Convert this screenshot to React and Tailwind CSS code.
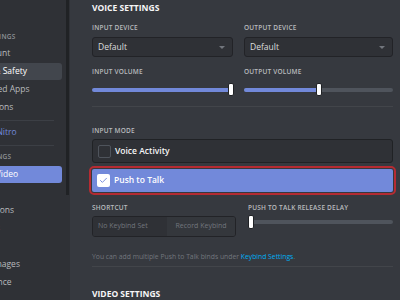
import { Check } from 'lucide-react';

const font = { fontFamily: '"Open Sans", "Noto Sans", sans-serif' };

function SideItem({ label, active, blue, nitro }) {
  let cls = 'text-[#b9bbbe]';
  if (active) cls = 'bg-[#42464d] text-white';
  if (blue) cls = 'bg-[#7289da] text-white';
  if (nitro) cls = 'text-[#7289da]';
  return (
    <div className={`h-[17px] mb-[1px] flex items-center px-[8px] rounded-[3px] text-[8.5px] font-medium whitespace-nowrap ${cls}`}>
      {label}
    </div>
  );
}

function SideHeader({ label, className }) {
  return (
    <div className={`h-[10px] flex items-center px-[8px] text-[6.5px] font-semibold tracking-[0.3px] text-[#8e9297] whitespace-nowrap ${className}`}>
      {label}
    </div>
  );
}

function Label({ children, className = '' }) {
  return (
    <div className={`h-[8px] flex items-center text-[6.5px] font-semibold tracking-[0.2px] text-[#b9bbbe] whitespace-nowrap ${className}`}>
      {children}
    </div>
  );
}

function Select({ value }) {
  return (
    <div className="mt-[5px] h-[20px] bg-[#2f3136] border border-[#222327] rounded-[3px] flex items-center justify-between pl-[5px] pr-[7px]">
      <span className="text-[8.5px] text-[#dcddde]">{value}</span>
      <span className="w-0 h-0 border-l-[3px] border-r-[3px] border-t-[3px] border-l-transparent border-r-transparent border-t-[#72767d]" />
    </div>
  );
}

function Slider({ pct }) {
  return (
    <div className="mt-[7px] h-[13px] relative flex items-center">
      <div className="w-full h-[4px] rounded-full bg-[#4f545c] overflow-hidden">
        <div className="h-full bg-[#7289da]" style={{ width: `${pct}%` }} />
      </div>
      <div
        className="absolute top-0 h-[13px] w-[6px] rounded-[2px] bg-white border border-[#202225]"
        style={{ left: `calc(${pct}% - 3px)` }}
      />
    </div>
  );
}

export default function App() {
  return (
    <div className="w-[400px] h-[300px] overflow-hidden flex bg-[#36393f]" style={font}>
      {/* sidebar, scrolled so its left part is out of view */}
      <div className="w-[70px] shrink-0 bg-[#2f3136] relative overflow-hidden">
        <div className="w-[106px] -ml-[44px]">
          <SideHeader label="USER SETTINGS" className="mt-[32px]" />
          <div className="mt-[3px]">
            <SideItem label="My Account" />
            <SideItem label="Privacy & Safety" active />
            <SideItem label="Authorized Apps" />
            <SideItem label="Connections" />
          </div>
          <div className="mt-[4px] h-px bg-[#3c3f45] mx-[8px]" />
          <div className="mt-[3px]">
            <SideItem label="Discord Nitro" nitro />
          </div>
          <div className="mt-[4px] h-px bg-[#3c3f45] mx-[8px]" />
          <SideHeader label="APP SETTINGS" className="mt-[6px]" />
          <div className="mt-[4px]">
            <SideItem label="Voice & Video" blue />
            <SideItem label="Overlay" />
            <SideItem label="Notifications" />
            <SideItem label="Keybinds" />
            <SideItem label="Games" />
            <SideItem label="Text & Images" />
            <SideItem label="Appearance" />
          </div>
        </div>
        <div className="absolute right-[1px] top-0 w-[3px] h-[195px] bg-[#202225]" />
      </div>

      {/* main */}
      <div className="flex-1 pl-[22px]">
        <div className="w-[301px] flex flex-col">
          <div className="mt-[3px] h-[10px] flex items-center text-[8.5px] font-bold text-[#f6f6f7]">
            VOICE SETTINGS
          </div>

          <div className="mt-[11px] grid grid-cols-[141px_149px] gap-x-[11px]">
            <div>
              <Label>INPUT DEVICE</Label>
              <Select value="Default" />
              <Label className="mt-[11px]">INPUT VOLUME</Label>
              <div className="w-[139px]">
                <Slider pct={100} />
              </div>
            </div>
            <div>
              <Label>OUTPUT DEVICE</Label>
              <Select value="Default" />
              <Label className="mt-[11px]">OUTPUT VOLUME</Label>
              <Slider pct={50} />
            </div>
          </div>

          <div className="mt-[10px] h-px bg-[#42454a]" />

          <Label className="mt-[20px]">INPUT MODE</Label>

          <div className="mt-[4px] h-[24px] bg-[#2f3136] border border-[#202225] rounded-[3px] flex items-center px-[5px] gap-[4px]">
            <div className="w-[13px] h-[13px] rounded-[2px] border border-[#4f545c]" />
            <span className="text-[8.5px] font-semibold text-[#f6f6f7]">Voice Activity</span>
          </div>

          <div className="mt-[6px] h-[23px] bg-[#7289da] rounded-[2px] flex items-center px-[5px] gap-[4px] outline-2 outline-offset-1 outline-[#b52b32]">
            <div className="w-[13px] h-[13px] rounded-[2px] bg-white flex items-center justify-center">
              <Check size={9} strokeWidth={2.5} color="#7289da" />
            </div>
            <span className="text-[8.5px] font-semibold text-white">Push to Talk</span>
          </div>

          <div className="mt-[12px] grid grid-cols-[144px_1fr] gap-x-[12px]">
            <div>
              <Label>SHORTCUT</Label>
              <div className="mt-[4px] h-[21px] flex border border-[#222327] rounded-[3px] overflow-hidden">
                <div className="w-[74px] bg-[#2f3136] flex items-center pl-[5px] text-[7px] text-[#72767d] whitespace-nowrap">
                  No Keybind Set
                </div>
                <div className="flex-1 bg-[#34373c] flex items-center justify-center text-[7px] text-[#72767d] whitespace-nowrap">
                  Record Keybind
                </div>
              </div>
            </div>
            <div>
              <Label>PUSH TO TALK RELEASE DELAY</Label>
              <div className="mt-[3px] h-[14px] relative flex items-center">
                <div className="w-full h-[4px] rounded-full bg-[#4f545c]" />
                <div className="absolute left-0 top-0 h-[14px] w-[6px] rounded-[2px] bg-white border border-[#202225]" />
              </div>
            </div>
          </div>

          <div className="mt-[16px] h-[8px] flex items-center text-[6.8px] text-[#72767d] whitespace-nowrap">
            You can add multiple Push to Talk binds under&nbsp;
            <span className="text-[#00aff4]">Keybind Settings</span>.
          </div>

          <div className="mt-[5px] h-px bg-[#42454a]" />

          <div className="mt-[22px] h-[10px] flex items-center text-[8.5px] font-bold text-[#f6f6f7]">
            VIDEO SETTINGS
          </div>
        </div>
      </div>
    </div>
  );
}
